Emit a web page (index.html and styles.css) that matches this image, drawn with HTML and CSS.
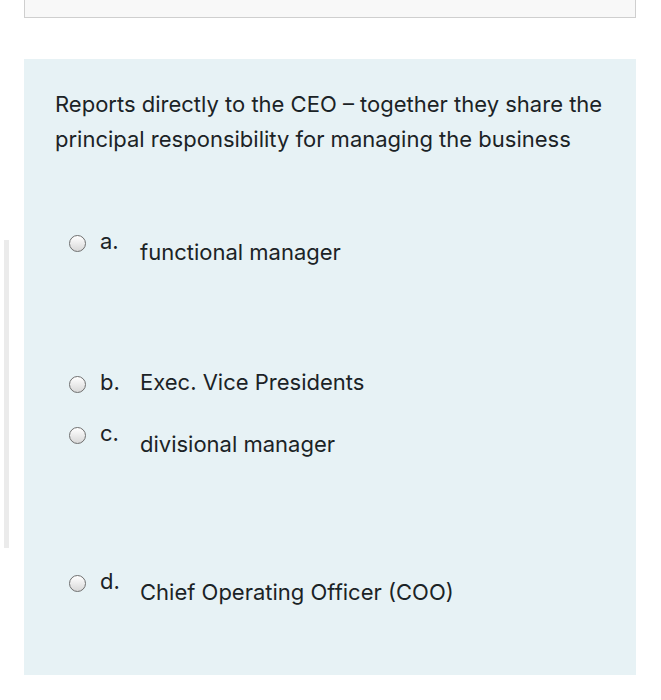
FILE: index.html
```html
<!DOCTYPE html>
<html lang="en">
<head>
<meta charset="utf-8">
<link rel="stylesheet" href="styles.css">
<title>Question</title>
</head>
<body>
<div class="page">
  <div class="gutter"><div class="gutter-bar"></div></div>
  <div class="main">
    <div class="info-box"></div>
    <div class="formulation">
      <p class="qtext">Reports directly to the CEO – together they share the principal responsibility for managing the business</p>
      <div class="answers">
        <label class="option">
          <span class="radio"></span>
          <span class="letter">a.</span>
          <span class="answer para">functional manager</span>
        </label>
        <label class="option">
          <span class="radio"></span>
          <span class="letter">b.</span>
          <span class="answer">Exec. Vice Presidents</span>
        </label>
        <label class="option">
          <span class="radio"></span>
          <span class="letter">c.</span>
          <span class="answer para wide">divisional manager</span>
        </label>
        <label class="option last">
          <span class="radio"></span>
          <span class="letter">d.</span>
          <span class="answer para">Chief Operating Officer (COO)</span>
        </label>
      </div>
    </div>
  </div>
</div>
</body>
</html>
```

FILE: styles.css
```css
* { box-sizing: border-box; }
html, body {
  margin: 0;
  padding: 0;
  background: #ffffff;
}
body {
  font-family: Inter, "Liberation Sans", Arial, sans-serif;
  color: #1b2326;
}
.page {
  display: grid;
  grid-template-columns: 24px 612px;
  align-items: start;
}
.gutter-bar {
  margin-top: 240px;
  margin-left: 4px;
  width: 5px;
  height: 308px;
  background: #ebebeb;
}
.info-box {
  height: 18px;
  background: #f8f8f8;
  border: 1px solid #cfcfcf;
  border-top: none;
}
.formulation {
  margin-top: 41px;
  background: #e7f2f5;
  padding: 28px 10px 0 31px;
}
.qtext {
  margin: 0;
  font-size: 22px;
  line-height: 35px;
}
.answers {
  margin-top: 72px;
  display: flex;
  flex-direction: column;
  gap: 27px;
}
.option {
  display: flex;
  align-items: flex-start;
  font-size: 22px;
  line-height: 24px;
}
.radio {
  flex: none;
  width: 17px;
  height: 17px;
  margin: 6px 0 0 14px;
  border-radius: 50%;
  border: 1px solid #6f6f6f;
  background: linear-gradient(#ffffff, #d8d8d8);
}
.letter {
  width: 40px;
  margin-left: 14px;
}
.answer.para {
  padding-top: 11px;
  padding-bottom: 79px;
}
.answer.para.wide {
  padding-bottom: 86px;
}
.option.last .answer.para {
  padding-bottom: 71px;
}
```
